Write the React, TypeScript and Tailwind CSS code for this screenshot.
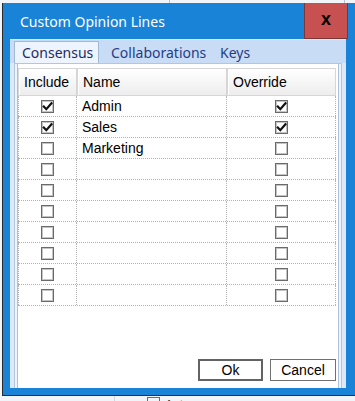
import React from 'react';

const rows = [
  { include: true, name: 'Admin', override: true },
  { include: true, name: 'Sales', override: true },
  { include: false, name: 'Marketing', override: false },
  { include: false, name: '', override: false },
  { include: false, name: '', override: false },
  { include: false, name: '', override: false },
  { include: false, name: '', override: false },
  { include: false, name: '', override: false },
  { include: false, name: '', override: false },
  { include: false, name: '', override: false },
];

const CheckBox = ({ checked }: { checked: boolean }) => (
  <div className="w-[13px] h-[13px] border border-[#6a6a6a] bg-white shadow-[inset_0_0_0_1px_#c4c4c4] flex items-center justify-center">
    {checked && (
      <svg width="11" height="11" viewBox="0 0 11 11">
        <path d="M1.8 5.6 L4.3 8.2 L9.4 2.4" fill="none" stroke="#111" strokeWidth="2.2" strokeLinecap="square" />
      </svg>
    )}
  </div>
);

const HeaderCell = ({ label, className }: { label: string; className: string }) => (
  <div className={`${className} h-full flex items-center pl-[5px] bg-gradient-to-b from-white to-[#ededed] border border-[#d6d6d6] shadow-[inset_1px_1px_0_#ffffff]`}>
    {label}
  </div>
);

export default function App() {
  return (
    <div className="w-[355px] h-[401px] overflow-hidden bg-[#f1f4f9] flex flex-col" style={{ fontFamily: '"Liberation Sans", Arial, sans-serif' }}>
      {/* app behind the dialog, top edge */}
      <div className="h-[3px] flex shrink-0">
        <div className="w-[170px] border-r border-[#b9c2cf]" />
        <div className="w-[175px] border-r border-[#b9c2cf]" />
      </div>

      {/* dialog window */}
      <div className="ml-[2px] w-[353px] h-[393px] shrink-0 bg-[#1883d7] border-l border-b border-[#2a2a2a] flex flex-col">
        {/* title bar */}
        <div className="h-[36px] flex items-center justify-between shrink-0">
          <div className="pl-[17px] pt-[1px] text-white text-[14px]" style={{ fontFamily: '"Noto Sans", sans-serif' }}>
            Custom Opinion Lines
          </div>
          <div className="w-[44px] h-[36px] mr-[7px] bg-[#c75050] border-l border-r border-b border-[#7e3535] flex items-center justify-center">
            <span className="text-black font-bold text-[18px] leading-none -mt-[3px]">x</span>
          </div>
        </div>

        {/* client area */}
        <div className="ml-[7px] mr-[9px] h-[349px] flex flex-col bg-[#d9e7f8]">
          {/* tabs */}
          <div className="h-[24px] flex items-end bg-[#c8dcf6] border-t border-[#d9e7f8] shrink-0 text-[14px]" style={{ fontFamily: '"Noto Sans", sans-serif' }}>
            <div className="ml-[4px] w-[85px] h-[22px] pl-[7px] flex items-center bg-[#edf4fd] border-t border-l border-r border-[#a2b9d6] text-[#1d2d62]">
              Consensus
            </div>
            <div className="w-[114px] h-[22px] pl-[12px] flex items-center text-[#263c86]">Collaborations</div>
            <div className="h-[22px] pl-[7px] flex items-center text-[#263c86]">Keys</div>
          </div>

          {/* tab page */}
          <div className="flex-1 flex px-[4px] bg-[#dde9f8]">
            <div className="flex-1 flex border-l border-r border-t border-[#b4c6dc] bg-[#edf4fd] px-[2px]">
              <div className="flex-1 flex flex-col bg-white border-l border-r border-[#b0c1d6] pt-[4px] pb-[7px] text-[14px] text-black">
                {/* grid */}
                <div className="w-[318px] flex flex-col">
                  <div className="h-[28px] flex">
                    <HeaderCell label="Include" className="w-[59px]" />
                    <HeaderCell label="Name" className="w-[150px]" />
                    <HeaderCell label="Override" className="w-[109px]" />
                  </div>
                  {rows.map((r, i) => (
                    <div key={i} className="h-[21px] flex border-b border-dotted border-[#b3b3b3]">
                      <div className="w-[59px] flex items-center justify-center border-l border-r border-dotted border-[#b3b3b3]">
                        <CheckBox checked={r.include} />
                      </div>
                      <div className="w-[150px] flex items-center pl-[5px] border-r border-dotted border-[#b3b3b3]">{r.name}</div>
                      <div className="w-[109px] flex items-center justify-center border-r border-dotted border-[#b3b3b3]">
                        <CheckBox checked={r.override} />
                      </div>
                    </div>
                  ))}
                </div>

                <div className="flex-1" />

                {/* buttons */}
                <div className="flex justify-end gap-[7px] pr-[2px]">
                  <button className="w-[65px] h-[22px] border-2 border-[#636363] bg-white flex items-center justify-center">Ok</button>
                  <button className="w-[66px] h-[22px] border border-[#707070] bg-white flex items-center justify-center">Cancel</button>
                </div>
              </div>
            </div>
          </div>
        </div>
      </div>

      {/* app behind the dialog, bottom edge */}
      <div className="h-[5px] flex shrink-0 text-[12px] text-[#333]">
        <div className="w-[115px] border-r border-[#d0d6de]" />
        <div className="w-[32px]" />
        <div className="w-[13px] h-[13px] border border-[#6a6a6a] mt-[1px]" />
        <div className="pl-[5px] pt-[0px] leading-[18px]">Auto save</div>
      </div>
    </div>
  );
}
